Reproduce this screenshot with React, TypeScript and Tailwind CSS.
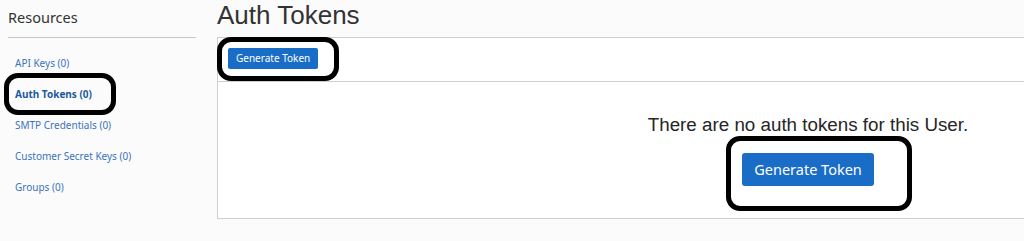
import type { ReactNode } from 'react'

const RESOURCES = [
  { label: 'API Keys (0)', active: false },
  { label: 'Auth Tokens (0)', active: true },
  { label: 'SMTP Credentials (0)', active: false },
  { label: 'Customer Secret Keys (0)', active: false },
  { label: 'Groups (0)', active: false },
]

// black rounded outline drawn over the screenshot as a callout
function Callout({ className, children }: { className: string; children: ReactNode }) {
  return (
    <div className="relative inline-flex">
      {children}
      <span
        className={`pointer-events-none absolute rounded-[14px] border-[5px] border-black ${className}`}
      />
    </div>
  )
}

function Sidebar() {
  return (
    <aside className="w-[217px] shrink-0 pl-2 pr-[21px] font-['Noto_Sans',sans-serif]">
      <h3 className="pt-[6px] text-[14.5px] leading-[22px] text-[#333]">Resources</h3>
      <div className="mt-[9px] border-t border-[#c9c9c9]" />
      <ul className="mt-[14px] flex flex-col gap-[13px] pl-[7px]">
        {RESOURCES.map((item) =>
          item.active ? (
            <li key={item.label} className="h-[18px] leading-[18px]">
              <Callout className="-left-[11px] -right-[24px] -top-[12px] -bottom-[12px]">
                <a className="text-[10px] font-bold leading-[18px] text-[#1d5a9e]">{item.label}</a>
              </Callout>
            </li>
          ) : (
            <li key={item.label} className="h-[18px] leading-[18px]">
              <a className="text-[10px] leading-[18px] text-[#3a74bb]">{item.label}</a>
            </li>
          ),
        )}
      </ul>
    </aside>
  )
}

export default function App() {
  return (
    <div className="flex h-[241px] w-[1024px] overflow-hidden bg-[#fbfbfb]">
      <Sidebar />
      <main className="min-w-0 flex-1">
        <h1 className="h-[37px] pt-[1px] font-['Liberation_Sans',Arial,sans-serif] text-[26px] leading-[28px] text-[#333]">
          Auth Tokens
        </h1>
        <div className="w-[1182px] border border-[#cfcfcf] bg-white">
          <div className="flex h-[44px] items-start border-b border-[#cfcfcf] px-[10px] pt-[10px]">
            <Callout className="-left-[11px] -top-[11px] -right-[21px] -bottom-[12px]">
              <button
                type="button"
                className="h-[21px] rounded-[2px] bg-[#1a6dc6] px-[8px] font-['Noto_Sans',sans-serif] text-[10px] leading-[21px] text-white"
              >
                Generate Token
              </button>
            </Callout>
          </div>
          <div className="flex h-[136px] flex-col items-center pt-[32px]">
            <p className="font-['Liberation_Sans',Arial,sans-serif] text-[18.8px] leading-[22px] text-[#262626]">
              There are no auth tokens for this User.
            </p>
            <div className="mt-[17px]">
              <Callout className="-left-[16px] -top-[17px] -right-[38px] -bottom-[25px]">
                <button
                  type="button"
                  className="h-[33px] w-[132px] rounded-[3px] bg-[#1a6dc6] font-['Noto_Sans',sans-serif] text-[14.5px] leading-[33px] text-white"
                >
                  Generate Token
                </button>
              </Callout>
            </div>
          </div>
        </div>
      </main>
    </div>
  )
}
